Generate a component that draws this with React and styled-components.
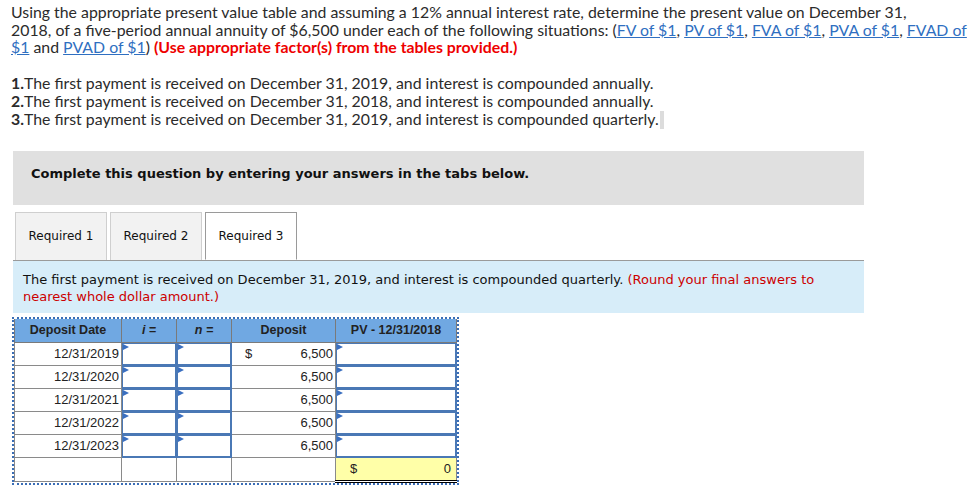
import React from "react"
import styled, { createGlobalStyle } from "styled-components"

const GlobalStyle = createGlobalStyle`
  body {
    margin: 0;
    background: #fff;
  }
`

const Page = styled.div`
  padding: 3px 0 0 11px;
  width: 960px;
`

const Question = styled.div`
  font-family: Lato, "Open Sans", sans-serif;
  font-size: 15.85px;
  line-height: 17.5px;
  color: #2b2b2b;
  white-space: nowrap;
`

const Link = styled.a`
  color: #2f6fc1;
  text-decoration: underline;
`

const Warn = styled.b`
  color: #ee0000;
`

const Steps = styled.div`
  margin-top: 18px;
  font-family: Lato, "Open Sans", sans-serif;
  font-size: 15.85px;
  line-height: 18px;
  color: #2b2b2b;
`

const Caret = styled.span`
  display: inline-block;
  width: 4px;
  height: 18px;
  margin-left: 1px;
  vertical-align: -4px;
  background: #dcdcdc;
`

const Banner = styled.div`
  margin: 22px 0 0 2px;
  width: 851px;
  height: 54px;
  box-sizing: border-box;
  padding: 15px 0 0 18px;
  background: #e0e0e0;
  font-family: "DejaVu Sans", Verdana, sans-serif;
  font-weight: bold;
  font-size: 13px;
  color: #111;
`

const Tabs = styled.div`
  display: flex;
  gap: 3px;
  margin: 7px 0 0 4px;
  position: relative;
  z-index: 1;
`

const Tab = styled.div`
  width: 92px;
  height: 48px;
  box-sizing: border-box;
  display: flex;
  align-items: center;
  justify-content: center;
  font-family: "DejaVu Sans", Verdana, sans-serif;
  font-size: 12px;
  color: #111;
  background: ${p => (p.$active ? "#fff" : "#f2f2f2")};
  border: 1px solid ${p => (p.$active ? "#9a9a9a" : "#cfcfcf")};
  border-bottom: ${p => (p.$active ? "1px solid #fff" : "none")};
  margin-bottom: ${p => (p.$active ? "-1px" : "0")};
`

const Panel = styled.div`
  margin-left: 2px;
  width: 851px;
  height: 53px;
  box-sizing: border-box;
  padding: 10px 0 0 10px;
  background: #d7edf9;
  border-top: 1px solid #9a9a9a;
  font-family: "DejaVu Sans", Verdana, sans-serif;
  font-size: 13px;
  line-height: 17px;
  color: #111;
`

const Red = styled.span`
  color: #cc0000;
`

const TableFrame = styled.div`
  margin: 4px 0 0 1px;
  display: inline-block;
  border: 2px dotted #3a6db5;
`

const Grid = styled.table`
  width: 442px;
  border-collapse: collapse;
  table-layout: fixed;
  font-family: "Liberation Sans", Arial, sans-serif;
  font-size: 13px;
  color: #222;
`

const Col = styled.col`
  width: ${p => p.$w}px;
`

const Head = styled.th`
  height: 23px;
  padding: 0;
  background: #70a8e2;
  border: 1px solid #7a7a7a;
  border-top: none;
  font-size: 12.5px;
  font-weight: bold;
  font-style: ${p => (p.$italic ? "italic" : "normal")};
  text-align: center;
`

const Cell = styled.td`
  height: 22px;
  padding: 0 2px;
  border: 1px solid #8a8a8a;
  text-align: right;
  vertical-align: middle;
`

const Input = styled.td`
  height: 22px;
  padding: 0;
  border: 1px solid #4a78b5;
  box-shadow: inset 0 0 0 1px #4a78b5;
  background: #fff;
  position: relative;
`

const Flag = styled.span`
  position: absolute;
  top: 1px;
  left: 1px;
  width: 0;
  height: 0;
  border-top: 3px solid transparent;
  border-bottom: 3px solid transparent;
  border-left: 6px solid #3a6fc0;
`

const Total = styled.td`
  height: 22px;
  padding: 0 5px 0 14px;
  background: #ffffa8;
  border: 1px solid #8a8a8a;
  border-bottom: 3px double #000;
`

const TotalInner = styled.div`
  display: flex;
  justify-content: space-between;
`

const Dollar = styled.span`
  float: left;
  margin-left: 11px;
`

const dates = ["12/31/2019", "12/31/2020", "12/31/2021", "12/31/2022", "12/31/2023"]

function InputCell() {
  return (
    <Input>
      <Flag />
    </Input>
  )
}

export default function App() {
  return (
    <>
      <GlobalStyle />
      <Page>
        <Question>
          Using the appropriate present value table and assuming a 12% annual interest rate, determine the present value on December 31,
          <br />
          2018, of a five-period annual annuity of $6,500 under each of the following situations: (<Link>FV of $1</Link>, <Link>PV of $1</Link>, <Link>FVA of $1</Link>, <Link>PVA of $1</Link>, <Link>FVAD of</Link>
          <br />
          <Link>$1</Link> and <Link>PVAD of $1</Link>) <Warn>(Use appropriate factor(s) from the tables provided.)</Warn>
        </Question>
        <Steps>
          <b>1.</b>The first payment is received on December 31, 2019, and interest is compounded annually.
          <br />
          <b>2.</b>The first payment is received on December 31, 2018, and interest is compounded annually.
          <br />
          <b>3.</b>The first payment is received on December 31, 2019, and interest is compounded quarterly.<Caret />
        </Steps>
        <Banner>Complete this question by entering your answers in the tabs below.</Banner>
        <Tabs>
          <Tab>Required 1</Tab>
          <Tab>Required 2</Tab>
          <Tab $active>Required 3</Tab>
        </Tabs>
        <Panel>
          The first payment is received on December 31, 2019, and interest is compounded quarterly. <Red>(Round your final answers to</Red>
          <br />
          <Red>nearest whole dollar amount.)</Red>
        </Panel>
        <TableFrame>
          <Grid>
            <colgroup>
              <Col $w={107} />
              <Col $w={55} />
              <Col $w={55} />
              <Col $w={104} />
              <Col $w={121} />
            </colgroup>
            <thead>
              <tr>
                <Head>Deposit Date</Head>
                <Head $italic>i =</Head>
                <Head $italic>n =</Head>
                <Head>Deposit</Head>
                <Head>PV - 12/31/2018</Head>
              </tr>
            </thead>
            <tbody>
              {dates.map((d, i) => (
                <tr key={d}>
                  <Cell>{d}</Cell>
                  <InputCell />
                  <InputCell />
                  <Cell>
                    {i === 0 && <Dollar>$</Dollar>}
                    6,500
                  </Cell>
                  <InputCell />
                </tr>
              ))}
              <tr>
                <Cell />
                <Cell />
                <Cell />
                <Cell />
                <Total>
                  <TotalInner>
                    <span>$</span>
                    <span>0</span>
                  </TotalInner>
                </Total>
              </tr>
            </tbody>
          </Grid>
        </TableFrame>
      </Page>
    </>
  )
}
